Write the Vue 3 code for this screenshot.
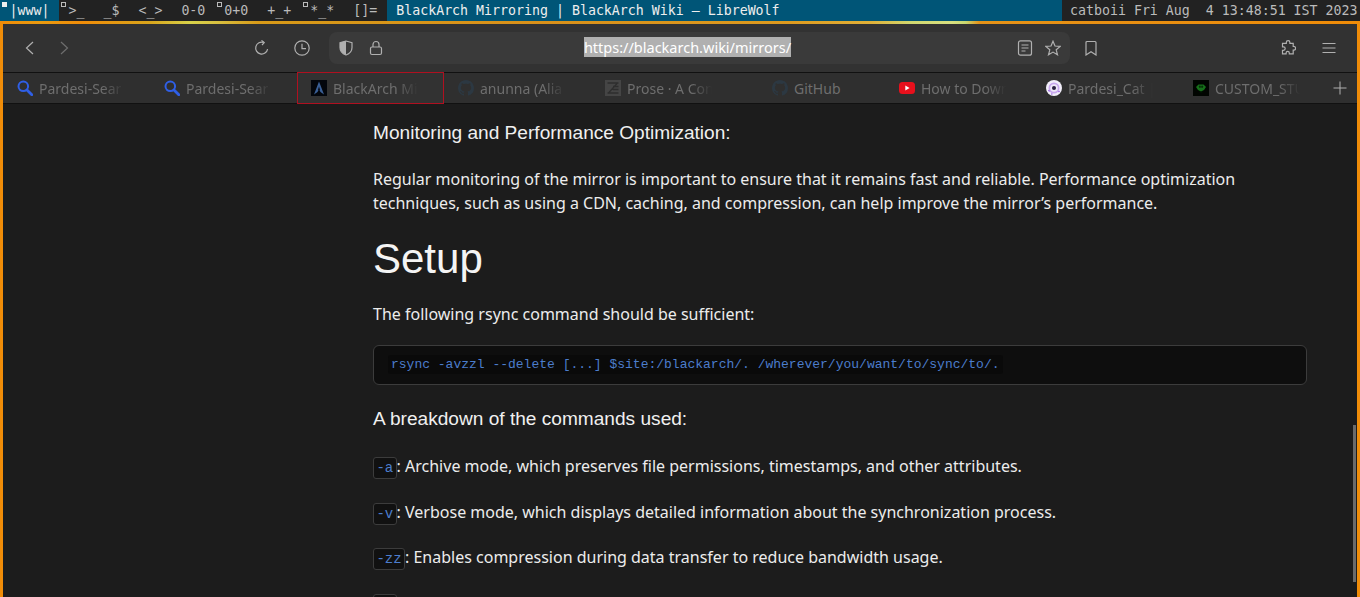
<script setup>
const status = 'catboii Fri Aug  4 13:48:51 IST 2023'
const tags = [
  { t: '|www|', sel: true, dot: 'fill' },
  { t: '>_', dot: 'open' },
  { t: '_$' },
  { t: '<_>' },
  { t: '0-0' },
  { t: '0+0', dot: 'open' },
  { t: '+_+' },
  { t: '*_*', dot: 'open' },
]
const tabs = [
  { t: 'Pardesi-Sear', i: 'search' },
  { t: 'Pardesi-Sear', i: 'search' },
  { t: 'BlackArch Mi', i: 'arch', active: true },
  { t: 'anunna (Alia', i: 'gh' },
  { t: 'Prose · A Con', i: 'prose' },
  { t: 'GitHub', i: 'gh', short: true },
  { t: 'How to Down', i: 'yt' },
  { t: 'Pardesi_Cat |', i: 'donut' },
  { t: 'CUSTOM_STU', i: 'green' },
]
const flags = [
  { c: '-a', d: ': Archive mode, which preserves file permissions, timestamps, and other attributes.' },
  { c: '-v', d: ': Verbose mode, which displays detailed information about the synchronization process.' },
  { c: '-zz', d: ': Enables compression during data transfer to reduce bandwidth usage.' },
]
const blank = '\u00a0\u00a0'
const ghPath = 'M8 0C3.58 0 0 3.58 0 8c0 3.54 2.29 6.53 5.47 7.59.4.07.55-.17.55-.38 0-.19-.01-.82-.01-1.49-2.01.37-2.53-.49-2.69-.94-.09-.23-.48-.94-.82-1.13-.28-.15-.68-.52-.01-.53.63-.01 1.08.58 1.23.82.72 1.21 1.87.87 2.33.66.07-.52.28-.87.51-1.07-1.78-.2-3.64-.89-3.64-3.95 0-.87.31-1.59.82-2.15-.08-.2-.36-1.02.08-2.12 0 0 .67-.21 2.2.82.64-.18 1.32-.27 2-.27s1.36.09 2 .27c1.53-1.04 2.2-.82 2.2-.82.44 1.1.16 1.92.08 2.12.51.56.82 1.27.82 2.15 0 3.07-1.87 3.75-3.65 3.95.29.25.54.73.54 1.48 0 1.07-.01 1.93-.01 2.2 0 .21.15.46.55.38A8.01 8.01 0 0 0 16 8c0-4.42-3.58-8-8-8z'
</script>

<template>
  <div class="screen">
    <header class="bar">
      <div v-for="tag in tags" :key="tag.t" class="tag" :class="{ sel: tag.sel }">
        <i v-if="tag.dot" class="dot" :class="tag.dot"></i>{{ tag.t }}
      </div>
      <div class="tag layout">[]=</div>
      <div class="title">BlackArch Mirroring | BlackArch Wiki — LibreWolf</div>
      <div class="status">{{ status }}</div>
    </header>
    <div class="wall">
      <main class="win">
        <nav class="toolbar">
          <svg class="ico back" viewBox="0 0 16 16"><path d="M11 2 4.500 8l6.500 6" /></svg>
          <svg class="ico fwd" viewBox="0 0 16 16"><path d="M5 2l6.500 6L5 14" /></svg>
          <svg class="ico reload" viewBox="0 0 16 16"><path d="M13.600 9.200A6 6 0 1 1 9.600 2.400" /><path d="M7.500 .4 10.200 2.600 8 5" /></svg>
          <svg class="ico hist" viewBox="0 0 16 16"><circle cx="8" cy="8" r="7.200" /><path d="M8 3.800V8.600h4" /></svg>
          <div class="url">
            <svg class="ico shield" viewBox="0 0 16 16"><path d="M8 1 2 2.600v5C2 11.500 5 14 8 15c3-1 6-3.500 6-7.400v-5z" /><path class="solid" d="M2 2.600 8 1v14c-3-1-6-3.500-6-7.400z" /></svg>
            <svg class="ico lock" viewBox="0 0 16 16"><rect x="2.500" y="7" width="11" height="7.500" rx="1.500" /><path d="M5 7V4.500a3 3 0 0 1 6 0V7" /></svg>
            <div class="addr"><span>https://blackarch.wiki/mirrors/</span></div>
            <svg class="ico reader" viewBox="0 0 16 16"><rect x="1.500" y=".8" width="13" height="14.400" rx="2" /><path d="M4.500 5h7M4.500 8h7M4.500 11h4" /></svg>
            <svg class="ico star" viewBox="0 0 16 16"><path d="M8 1.200 10 6l5.200.4-4 3.400 1.300 5L8 12.100 3.500 14.800l1.300-5-4-3.400L6 6z" /></svg>
          </div>
          <svg class="ico mark" viewBox="0 0 16 16"><path d="M4 1.500h8a1 1 0 0 1 1 1V15L8 11.800 3 15V2.500a1 1 0 0 1 1-1z" /></svg>
          <svg class="ico puzzle" viewBox="0 0 16 16"><path d="M6.300 3.300V2.500a1.800 1.800 0 0 1 3.600 0v.8h3.300v3h.5a1.900 1.900 0 0 1 0 3.800h-.5v3.800H9.300v-1a1.600 1.600 0 0 0-3.200 0v1H2.500v-3.600h1a1.700 1.700 0 0 0 0-3.400h-1V3.300z" /></svg>
          <svg class="ico burger" viewBox="0 0 16 16"><path d="M1.500 3.500h13M1.500 8h13M1.500 12.500h13" /></svg>
        </nav>
        <div class="tabs">
          <div v-for="(tab, n) in tabs" :key="n" class="tab" :class="{ active: tab.active, short: tab.short }">
            <svg v-if="tab.i === 'search'" class="fav" viewBox="0 0 16 16">
              <circle cx="6.300" cy="6.300" r="4.800" fill="none" stroke="#2f5fe6" stroke-width="2" />
              <path d="M10 10l4.800 4.800" stroke="#2f5fe6" stroke-width="2.800" stroke-linecap="round" />
            </svg>
            <svg v-else-if="tab.i === 'arch'" class="fav" viewBox="0 0 16 16">
              <rect width="16" height="16" fill="#03060c" />
              <path d="M8 1.500 3 14.500l3.500-2.500L8 9l1.500 3 3.500 2.500z" fill="#3a5f96" />
              <path d="M8 6.500 6.800 10h2.400z" fill="#0a1220" />
            </svg>
            <svg v-else-if="tab.i === 'gh'" class="fav" viewBox="0 0 16 16"><path :d="ghPath" fill="#2c3842" /></svg>
            <svg v-else-if="tab.i === 'prose'" class="fav" viewBox="0 0 16 16">
              <rect width="16" height="16" fill="#454545" />
              <path d="M2.500 3h11M8 6.500h5.500M8 9.500h5.500M2.500 13h11M3 13.500 12.500 3" stroke="#2e2e2e" stroke-width="1.300" fill="none" />
            </svg>
            <svg v-else-if="tab.i === 'yt'" class="fav" viewBox="0 0 16 16">
              <rect y="2" width="16" height="12" rx="3.500" fill="#e8101c" />
              <path d="M6.300 5.500v5L10.600 8z" fill="#fff" />
            </svg>
            <svg v-else-if="tab.i === 'donut'" class="fav" viewBox="0 0 16 16">
              <circle cx="8" cy="8" r="8" fill="#f2eefa" />
              <circle cx="8" cy="8" r="5.500" fill="#c8a8ee" />
              <circle cx="8" cy="8" r="3.800" fill="#efe8f8" />
              <circle cx="8" cy="8" r="2" fill="#2a2140" />
              <path d="M2.500 10l1 1.500M12.500 12l1-1M5 14h1.500" stroke="#9252e0" stroke-width="1.200" />
            </svg>
            <svg v-else class="fav" viewBox="0 0 16 16">
              <rect width="16" height="16" fill="#010501" />
              <path d="M3 7l2.500-2.500h5L13 7l-2 3-3 1.500L5 10z" fill="#16701a" />
              <path d="M6 6h1.500L7 8zM10 6H8.500L9 8zM6.500 12h3" stroke="#052a07" fill="#052a07" stroke-width=".6" />
            </svg>
            <span class="label" :class="{ fade: !tab.short }">{{ tab.t }}</span>
          </div>
          <svg class="ico plus" viewBox="0 0 16 16"><path d="M8 1.500v13M1.500 8h13" /></svg>
        </div>
        <article class="page">
          <div class="col">
            <h4 class="first">Monitoring and Performance Optimization:</h4>
            <p>Regular monitoring of the mirror is important to ensure that it remains fast and reliable. Performance optimization techniques, such as using a CDN, caching, and compression, can help improve the mirror’s performance.</p>
            <h1>Setup</h1>
            <p>The following rsync command should be sufficient:</p>
            <pre class="block"><code>rsync -avzzl --delete [...] $site:/blackarch/. /wherever/you/want/to/sync/to/.</code></pre>
            <h4>A breakdown of the commands used:</h4>
            <p v-for="f in flags" :key="f.c" class="flag"><code class="chip">{{ f.c }}</code>{{ f.d }}</p>
            <p class="flag"><code class="chip">{{ blank }}</code></p>
          </div>
          <div class="thumb"></div>
        </article>
      </main>
    </div>
  </div>
</template>

<style>
html, body { margin: 0; height: 100%; overflow: hidden; background: #1c1c1c; }
</style>

<style scoped>
.screen { width: 1360px; height: 597px; overflow: hidden; display: flex; flex-direction: column; }
.bar { height: 21px; flex: none; display: flex; background: #222; color: #bbb; font: 13.27px/22px "DejaVu Sans Mono", monospace; white-space: pre; }
.tag { padding: 0 9.500px; position: relative; }
.tag.sel { background: #005577; color: #eee; }
.dot { position: absolute; left: 2px; top: 2px; width: 5px; height: 5px; box-sizing: border-box; }
.dot.fill { background: #eee; }
.dot.open { border: 1px solid #bbb; }
.title { flex: 1; background: #005577; color: #eee; padding-left: 9.500px; }
.status { width: 298px; box-sizing: border-box; padding-left: 8px; }
.wall { flex: 1; min-height: 0; padding: 3px 3px 0; background: linear-gradient(90deg, #f08c08 0, #e89a10 3%, #f08c08 6%, #d9a51c 11%, #d8d24a 14%, #d8c040 16%, #d89a18 19%, #d8901a 40%, #dd9a1f 58%, #e0b038 64%, #d0d870 67%, #d8e080 70%, #c8d870 71%, #e49218 72%, #f08c08 100%); }
.win { height: 100%; background: #1c1c1c; display: flex; flex-direction: column; overflow: hidden; }
.toolbar { height: 48px; flex: none; background: #323232; display: flex; align-items: center; position: relative; }
.ico { fill: none; stroke: #b0b0b0; stroke-width: 1.200; flex: none; width: 16px; height: 16px; }
.back { margin-left: 19px; }
.fwd { margin-left: 18px; stroke: #6e6e6e; }
.reload { margin-left: 182px; }
.hist { margin-left: 24px; }
.url { margin-left: 19px; width: 741px; height: 32px; background: #3a3a3a; border-radius: 8px; display: flex; align-items: center; }
.shield { margin-left: 9px; }
.solid { fill: #b0b0b0; stroke: none; }
.lock { margin-left: 14px; }
.addr { flex: 1; text-align: center; font: 14.500px/20px "Noto Sans", sans-serif; color: #fff; padding-right: 26px; margin-top: -2px; }
.addr span { background: #b0b0b0; display: inline-block; }
.reader { margin-right: 12px; }
.star { margin-right: 9px; }
.mark { margin-left: 13px; }
.puzzle { margin-left: 181px; }
.burger { margin-left: 25px; }
.tabs { height: 30px; flex: none; background: #2f2f2f; border-top: 1px solid #111; border-bottom: 1px solid #111; display: flex; position: relative; }
.tab { width: 147px; box-sizing: border-box; padding: 0 14px; flex: none; display: flex; align-items: center; gap: 6px; color: #6e6e6e; font: 14px/20px "Noto Sans", sans-serif; }
.tab.short { padding-left: 34px; }
.tab.active { border: 1px solid #b01020; margin-top: -1px; height: 32px; background: #323232; padding-left: 13px; position: relative; }
.fav { width: 16px; height: 16px; flex: none; }
.label { white-space: nowrap; padding-top: 1px; }
.label.fade { flex: none; width: 97px; overflow: hidden; -webkit-mask-image: linear-gradient(90deg, #000 66%, transparent 88%); mask-image: linear-gradient(90deg, #000 66%, transparent 88%); }
.plus { margin: 7px 0 0 6px; stroke-width: 1; }
.page { flex: 1; min-height: 0; position: relative; overflow: hidden; background: #1c1c1c; color: #ececec; }
.col { width: 934px; margin-left: 370px; font: 16px/24px "Noto Sans", sans-serif; }
h4 { font: 400 19.100px/24px "Liberation Sans", sans-serif; margin: 0; color: #f0f0f0; }
h4.first { padding-top: 17px; }
p { margin: 22px 0 0; }
h1 { font: 400 42px/48px "Liberation Sans", sans-serif; color: #f4f4f4; margin: 20px 0 0; }
h1 + p { margin-top: 19px; }
.block { margin: 19px 0 0; height: 40px; box-sizing: border-box; border: 1px solid #3c3c3c; border-radius: 6px; background: #0e0e0e; padding: 9px 14px; overflow: hidden; display: flex; align-items: flex-start; }
.block code { font: 13px/19px "Liberation Mono", monospace; color: #4c7dcc; background: #0a0a0a; padding: 0 3px; border-radius: 3px; }
.block + h4 { margin-top: 22px; }
.flag { margin-top: 21.500px; }
h4 + .flag { margin-top: 23px; }
.chip { display: inline-block; font: 14px/20px "Liberation Mono", monospace; color: #4c7dcc; background: #111; border: 1px solid #3c3c3c; border-radius: 3px; padding: 0 2.400px; vertical-align: 0; margin: -4px 0; }
.thumb { position: absolute; left: 1350px; top: 321px; width: 3px; height: 157px; background: #6a6a6a; }
</style>
